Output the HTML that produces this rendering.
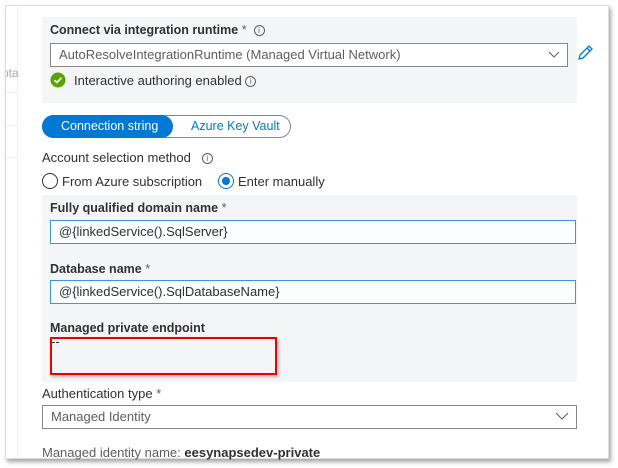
<!DOCTYPE html>
<html><head><style>
*{margin:0;padding:0;box-sizing:border-box}
body{width:618px;height:468px;background:#fff;position:relative;overflow:hidden;font-family:"Liberation Sans",sans-serif;color:#323130;font-size:13px}
.a{position:absolute;white-space:nowrap}
.frame{position:absolute;left:5px;top:5px;width:604px;height:454px;background:#fff;border:1px solid #ddd;box-shadow:2px 3px 4px rgba(0,0,0,.35);overflow:hidden}
.grey{position:absolute;background:#f4f5f7}
.inp{position:absolute;background:#fff;border:1px solid #8a8886;height:24px;padding-left:8px;line-height:22px;color:#605e5c}
.blue{border:1px solid #3a96dd;background:#fbfdff;color:#323130}
.lbl{font-weight:bold;color:#323130;font-size:12.5px}
.star{color:#605e5c;font-weight:normal}
.info{display:inline-block;width:11px;height:11px;border:1px solid #605e5c;border-radius:50%;font-size:8px;line-height:9px;text-align:center;vertical-align:1px;color:#605e5c;font-weight:normal}
</style></head><body>
<div class="frame">
 <div class="a" style="left:0;top:0;width:12px;height:454px;border-right:1px solid #eee"></div>
 <div class="a" style="left:0;top:86px;width:12px;border-top:1px solid #eee"></div>
 <div class="a" style="left:0;top:119px;width:12px;border-top:1px solid #eee"></div>
 <div class="a" style="left:0;top:151px;width:12px;border-top:1px solid #eee"></div>
 <div class="a" style="left:-4px;top:60px;color:#aaa;font-size:12px">pta</div>
</div>
<div class="grey" style="left:42px;top:17px;width:535px;height:86px"></div>
<div class="a lbl" style="left:50px;top:23px">Connect via integration runtime <span class="star">*</span> &nbsp;<span class="info">i</span></div>
<div class="inp" style="left:50px;top:43px;width:518px">AutoResolveIntegrationRuntime (Managed Virtual Network)</div>
<svg class="a" style="left:548px;top:49px" width="12" height="10"><path d="M1 3l5 5 5-5" stroke="#605e5c" fill="none"/></svg>
<svg class="a" style="left:576px;top:44px" width="18" height="18"><path d="M3 15l1-4 9-9 3 3-9 9zM11 4l3 3" stroke="#0078d4" fill="none" stroke-width="1.3"/></svg>
<svg class="a" style="left:50px;top:72px" width="16" height="16"><circle cx="8" cy="8" r="7.5" fill="#57a300"/><path d="M4.5 8.2l2.3 2.3 4.7-4.7" stroke="#fff" stroke-width="1.8" fill="none"/></svg>
<div class="a" style="left:74px;top:73px">Interactive authoring enabled <span class="info">i</span></div>
<div class="a" style="left:42px;top:115px;width:249px;height:23px;border:1px solid #8a8886;border-radius:12px"></div>
<div class="a" style="left:42px;top:115px;width:131px;height:23px;background:#0078d4;border-radius:12px;color:#fff;line-height:23px;padding-left:19px;font-size:12.5px">Connection string</div>
<div class="a" style="left:191px;top:115px;line-height:23px;color:#0078d4;font-size:12.5px">Azure Key Vault</div>
<div class="a" style="left:42px;top:150px">Account selection method &nbsp;&nbsp;<span class="info">i</span></div>
<div class="a" style="left:42px;top:173px;width:16px;height:16px;border:1px solid #323130;border-radius:50%"></div>
<div class="a" style="left:62px;top:174px">From Azure subscription</div>
<div class="a" style="left:218px;top:173px;width:16px;height:16px;border:1px solid #0078d4;border-radius:50%"></div>
<div class="a" style="left:222px;top:177px;width:8px;height:8px;background:#0078d4;border-radius:50%"></div>
<div class="a" style="left:238px;top:174px">Enter manually</div>
<div class="grey" style="left:42px;top:195px;width:535px;height:187px"></div>
<div class="a lbl" style="left:50px;top:201px">Fully qualified domain name <span class="star">*</span></div>
<div class="inp blue" style="left:50px;top:220px;width:526px">@{linkedService().SqlServer}</div>
<div class="a lbl" style="left:50px;top:262px">Database name <span class="star">*</span></div>
<div class="inp blue" style="left:50px;top:280px;width:526px">@{linkedService().SqlDatabaseName}</div>
<div class="a lbl" style="left:50px;top:321px">Managed private endpoint</div>
<div class="a" style="left:51px;top:334px;color:#323130">--</div>
<div class="a" style="left:50px;top:337px;width:227px;height:38px;border:2px solid #e00;box-shadow:2px 2px 3px rgba(0,0,0,.25)"></div>
<div class="a" style="left:42px;top:386px">Authentication type <span class="star">*</span></div>
<div class="inp" style="left:42px;top:405px;width:535px">Managed Identity</div>
<svg class="a" style="left:555px;top:411px" width="14" height="10"><path d="M1 2l6 6 6-6" stroke="#605e5c" fill="none"/></svg>
<div class="a" style="left:42px;top:445px;color:#605e5c">Managed identity name: <b style="color:#323130">eesynapsedev-private</b></div>
</body></html>
